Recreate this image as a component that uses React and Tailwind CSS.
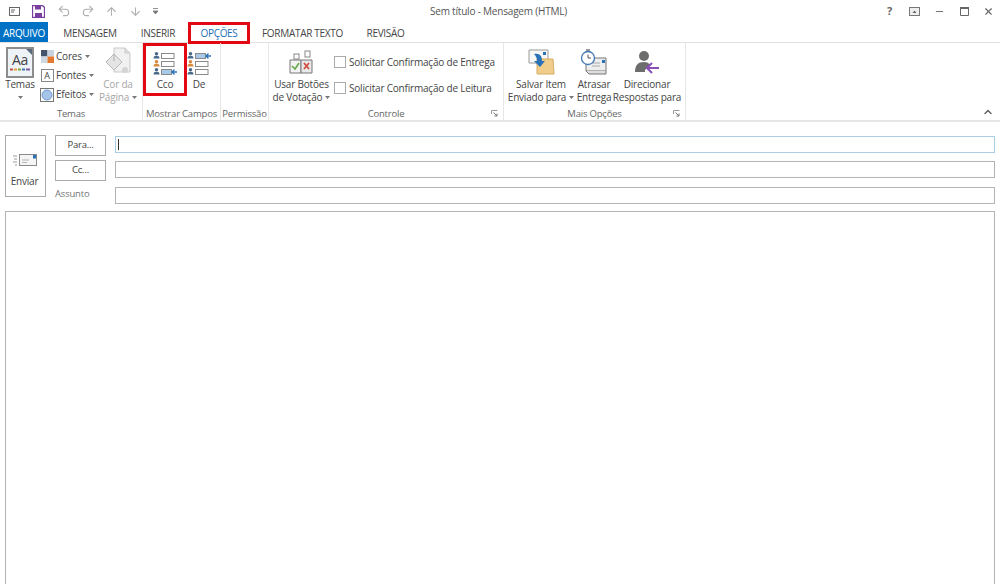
import React from "react";
import { Undo2, Redo2, ArrowUp, ArrowDown, Minus, X, ChevronUp } from "lucide-react";

// ---- Small drawings ----
const Caret = ({ className = "" }) => (
  <svg width="5" height="3" viewBox="0 0 5 3" className={`inline-block ${className}`}>
    <path d="M0 0h5L2.5 3z" fill="#777" />
  </svg>
);

const Launcher = () => (
  <svg width="7" height="7" viewBox="0 0 7 7">
    <path d="M.5 4V.5H6.5" fill="none" stroke="#999" />
    <path d="M2.5 2.5L6 6M6 3.5V6H3.5" fill="none" stroke="#777" />
  </svg>
);

const Person = ({ x, y, color }) => (
  <g>
    <circle cx={x + 3} cy={y + 1.8} r="1.8" fill={color} />
    <path d={`M${x} ${y + 6.5}c0-2 1-2.7 3-2.7s3 .7 3 2.7z`} fill={color} />
  </g>
);

const FieldsIcon = ({ variant }) => {
  const blueRow = variant === "cco" ? 2 : 0;
  return (
    <svg width="24" height="25" viewBox="0 0 24 25">
      {[0, 1, 2].map((i) => (
        <g key={i}>
          <Person x={0.5} y={1 + i * 8} color={i === 1 ? "#d98a3d" : "#4a6a8a"} />
          <rect
            x="8.5"
            y={2.5 + i * 8}
            width={i === blueRow ? 10 : 12.5}
            height="5"
            fill={i === blueRow ? "#a9c9e8" : "#fff"}
            stroke="#8a8a8a"
          />
          {i === blueRow && (
            <path
              d={`M24 ${5 + i * 8}h-5M21.5 ${2.5 + i * 8}L19 ${5 + i * 8}l2.5 2.5`}
              fill="none"
              stroke="#2a72b8"
              strokeWidth="1.4"
            />
          )}
        </g>
      ))}
    </svg>
  );
};

const ThemesIcon = () => (
  <div className="relative flex h-[31px] w-[28px] flex-col items-center border-2 border-[#8d8d8d] bg-[#eef3f8] pt-[2px]">
    <span className="text-[14px] leading-[17px] text-[#444]">Aa</span>
    <svg width="20" height="3" viewBox="0 0 20 3">
      <path d="M0 1.5h3" stroke="#c0504d" strokeWidth="2" />
      <path d="M4 1.5h3" stroke="#e89b3c" strokeWidth="2" />
      <path d="M8 1.5h3" stroke="#7aa843" strokeWidth="2" />
      <path d="M12 1.5h3" stroke="#3f76b8" strokeWidth="2" />
      <path d="M16 1.5h4" stroke="#7b5aa6" strokeWidth="2" />
    </svg>
    <svg width="6" height="6" viewBox="0 0 6 6" className="absolute right-0 top-0">
      <path d="M0 0h6v6z" fill="#5a6b7d" />
    </svg>
  </div>
);

const ColorsIcon = () => (
  <svg width="13" height="13" viewBox="0 0 13 13">
    <rect width="6.5" height="6.5" fill="#44546a" />
    <rect x="6.5" width="6.5" height="6.5" fill="#c9d3de" />
    <rect y="6.5" width="6.5" height="6.5" fill="#cfd8e3" />
    <rect x="6.5" y="6.5" width="6.5" height="6.5" fill="#e2792f" />
  </svg>
);

const EffectsIcon = () => (
  <svg width="14" height="14" viewBox="0 0 14 14">
    <rect x=".5" y=".5" width="13" height="13" fill="#fff" stroke="#777" />
    <circle cx="7" cy="7" r="5" fill="#a5c4ea" stroke="#6f9bd1" />
  </svg>
);

const PageColorIcon = () => (
  <svg width="26" height="30" viewBox="0 0 26 30">
    <path d="M9 1h11l5 5v19H9z" fill="#f1f1f1" stroke="#c9c9c9" />
    <path d="M20 1v5h5" fill="#ddd" stroke="#c9c9c9" />
    <path d="M1 15l8-8 8 8-8 8z" fill="#e4e4e4" stroke="#b9b9b9" />
    <path d="M9 7v7" stroke="#b0b0b0" />
    <circle cx="20" cy="23" r="3" fill="#d4d4d4" />
  </svg>
);

const VoteIcon = () => (
  <svg width="25" height="24" viewBox="0 0 25 24">
    <rect x="5" y="4" width="5" height="5" fill="#fff" stroke="#888" />
    <rect x="16" y="1" width="5" height="6" fill="#fff" stroke="#888" />
    <path d="M1 10h11v13H1z" fill="#f3f3f3" stroke="#777" />
    <path d="M12 10h11v13H12z" fill="#e8e8e8" stroke="#777" />
    <path d="M3 16l3 3 4-6" fill="none" stroke="#62a744" strokeWidth="1.5" />
    <path d="M15 13l5 6M20 13l-5 6" fill="none" stroke="#cf4a3c" strokeWidth="1.7" />
  </svg>
);

const SaveSentIcon = () => (
  <svg width="27" height="26" viewBox="0 0 27 26">
    <path d="M1 1h19v13H1z" fill="#f7f7f7" stroke="#9a9a9a" />
    <rect x="15" y="3" width="3" height="3" fill="#2a72b8" />
    <path d="M9 10h16l1 15H9z" fill="#f0cd8a" stroke="#d6ad63" />
    <path d="M6 5c6-1 8 2 8 7h3l-5 6-6-6h3c0-3-1-5-3-7z" fill="#2a72b8" />
  </svg>
);

const DelayIcon = () => (
  <svg width="28" height="26" viewBox="0 0 28 26">
    <path d="M6 9h20v13H6z" fill="#eee" stroke="#777" />
    <path d="M6 22l3 3h17v-3" fill="#ddd" stroke="#777" />
    <path d="M12 14h8M12 17h8" stroke="#aaa" />
    <rect x="22" y="11" width="3" height="3" fill="#2a72b8" />
    <circle cx="8" cy="9" r="6.5" fill="#fff" stroke="#3f76b8" strokeWidth="1.3" />
    <path d="M8 5.5V9h3" fill="none" stroke="#555" />
    <path d="M6 1h4" stroke="#777" strokeWidth="1.5" />
  </svg>
);

const ReplyToIcon = () => (
  <svg width="24" height="25" viewBox="0 0 24 25">
    <circle cx="9" cy="6" r="5" fill="#6d6d6d" />
    <path d="M0 22c0-7 3-10 9-10 3 0 5 1 6 3l-5 5v2z" fill="#6d6d6d" />
    <path d="M24 18H12M17 13l-5 5 5 5" fill="none" stroke="#8a4fb5" strokeWidth="2" />
  </svg>
);

const SendIcon = () => (
  <svg width="24" height="14" viewBox="0 0 24 14">
    <path d="M0 3h4M1 6h3M0 9h4M2 12h2" stroke="#9a9a9a" />
    <rect x="6.5" y="1.5" width="17" height="11" fill="#f5f5f5" stroke="#8a8a8a" />
    <rect x="20" y="2" width="3" height="3.5" fill="#2a72b8" />
    <path d="M9 7h7M9 9.5h5" stroke="#b5b5b5" />
  </svg>
);

// ---- Ribbon pieces ----
const Group = ({ width, label, launcher, children }) => (
  <div className="flex h-full shrink-0 flex-col border-r border-[#e6e6e6]" style={{ width }}>
    <div className="flex h-[65px] items-start">{children}</div>
    <div className="relative flex h-[11px] items-center justify-center whitespace-nowrap text-[9.5px] leading-[11px] text-[#666]">
      {label}
      {launcher && (
        <span className="absolute right-[5px] top-[2px] flex">
          <Launcher />
        </span>
      )}
    </div>
  </div>
);

const BigButton = ({ icon, lines, width, iconBox = "h-[32px]", muted = false }) => (
  <div
    className={`flex shrink-0 flex-col items-center text-[10px] leading-[13px] ${muted ? "text-[#a6a6a6]" : "text-[#444]"}`}
    style={{ width }}
  >
    <div className={`flex items-center justify-center ${iconBox}`}>{icon}</div>
    {lines.map((l, i) => (
      <span key={i} className="flex items-center gap-[3px] whitespace-nowrap">{l}</span>
    ))}
  </div>
);

const SmallItem = ({ icon, label }) => (
  <div className="flex h-[19px] items-center gap-[2px] text-[10px] text-[#444]">
    <span className="flex w-[14px] justify-center">{icon}</span>
    <span>{label}</span>
    <Caret className="ml-[1px]" />
  </div>
);

const Check = ({ label }) => (
  <div className="flex h-[26px] items-center gap-[3px] text-[10px] text-[#444]">
    <span className="h-[12px] w-[12px] border border-[#ababab] bg-white" />
    <span className="whitespace-nowrap">{label}</span>
  </div>
);

const Field = ({ focused, className = "mt-[1px] h-[17px]", children }) => (
  <div
    className={`ml-[9px] flex flex-1 items-center border bg-white ${className} ${focused ? "border-[#a9cde3]" : "border-[#b4b4b4]"}`}
  >
    {children}
  </div>
);

const SideButton = ({ label }) => (
  <div className="flex h-[21px] w-[51px] shrink-0 items-center justify-center border border-[#ababab] bg-white text-[9.5px] text-[#444]">
    {label}
  </div>
);

export default function App() {
  return (
    <div className="flex h-[584px] w-[1000px] flex-col overflow-hidden bg-white font-['Open_Sans',sans-serif] tracking-[-0.2px] text-[#444]">
      {/* title bar */}
      <div className="flex h-[22px] shrink-0 items-center pl-[9px] pr-[6px]">
        <svg width="11" height="9" viewBox="0 0 11 9" className="mr-[12px] shrink-0">
          <rect x=".5" y=".5" width="10" height="8" fill="#fff" stroke="#666" />
          <path d="M2 3h4M2 5h3" stroke="#666" />
        </svg>
        <svg width="13" height="13" viewBox="0 0 13 13" className="mr-[12px] shrink-0">
          <path d="M.5.5h10l2 2v10H.5z" fill="#fff" stroke="#7a3fa0" strokeWidth="1.3" />
          <rect x="3" y="1" width="6" height="3.5" fill="#7a3fa0" />
          <rect x="3" y="8" width="7" height="4.5" fill="#7a3fa0" />
        </svg>
        <Undo2 size={14} strokeWidth={2} className="mr-[10px] shrink-0 text-[#b0b0b0]" />
        <Redo2 size={14} strokeWidth={2} className="mr-[10px] shrink-0 text-[#b0b0b0]" />
        <ArrowUp size={13} strokeWidth={2} className="mr-[11px] shrink-0 text-[#b0b0b0]" />
        <ArrowDown size={13} strokeWidth={2} className="mr-[11px] shrink-0 text-[#b0b0b0]" />
        <svg width="5" height="6" viewBox="0 0 5 6" className="shrink-0">
          <path d="M0 .5h5M0 3h5L2.5 6z" stroke="#777" fill="#777" strokeWidth=".8" />
        </svg>
        <span className="flex-1 pr-[48px] text-center text-[10px] text-[#555]">Sem título - Mensagem (HTML)</span>
        <span className="w-[9px] text-[11px] font-bold text-[#666]">?</span>
        <svg width="11" height="9" viewBox="0 0 11 9" className="ml-[13px]">
          <rect x=".5" y=".5" width="10" height="8" fill="#eee" stroke="#777" />
          <path d="M3.5 6L5.5 3.5 7.5 6z" fill="#666" />
        </svg>
        <Minus size={11} strokeWidth={2} className="ml-[14px] text-[#666]" />
        <svg width="9" height="9" viewBox="0 0 9 9" className="ml-[15px]">
          <path d="M.5 1.5h8v7h-8z" fill="#fff" stroke="#666" />
          <path d="M0 1h9" stroke="#666" strokeWidth="2" />
        </svg>
        <X size={11} strokeWidth={2.5} className="ml-[14px] text-[#666]" />
      </div>

      {/* tabs */}
      <div className="flex h-[21px] shrink-0 items-stretch border-b border-[#e1e1e1] text-[10px] leading-[22px] tracking-[-0.3px] text-[#444]">
        <div className="w-[48px] bg-[#0072c6] text-center text-white">ARQUIVO</div>
        <div className="ml-[8px] w-[68px] text-center">MENSAGEM</div>
        <div className="ml-[6px] w-[56px] text-center">INSERIR</div>
        <div className="ml-[2px] h-[22px] w-[62px] border-[3px] border-[#e30613] text-center leading-[17px] text-[#1c6fb5]">OPÇÕES</div>
        <div className="ml-[12px] w-[80px] whitespace-nowrap text-center">FORMATAR TEXTO</div>
        <div className="ml-[24px] w-[39px] text-center">REVISÃO</div>
      </div>

      {/* ribbon */}
      <div className="relative flex h-[79px] shrink-0 border-b-2 border-[#e6e6e6]">
        <Group width={143} label="Temas">
          <div className="flex w-full pt-[3px]">
            <BigButton width={40} icon={<ThemesIcon />} lines={["Temas", <Caret className="mt-[5px]" />]} />
            <div className="flex w-[57px] shrink-0 flex-col pt-[1px]">
              <SmallItem icon={<ColorsIcon />} label="Cores" />
              <SmallItem icon={<span className="flex h-[13px] w-[13px] items-center justify-center border border-[#888] text-[9px]">A</span>} label="Fontes" />
              <SmallItem icon={<EffectsIcon />} label="Efeitos" />
            </div>
            <BigButton width={42} muted icon={<PageColorIcon />} lines={["Cor da", <>Página<Caret /></>]} />
          </div>
        </Group>
        <Group width={78} label="Mostrar Campos">
          <div className="flex w-full">
            <div className="h-[53px] w-[44px] shrink-0 border-[3px] border-[#e30613] pt-[3px]">
              <BigButton width={38} iconBox="h-[29px]" icon={<FieldsIcon variant="cco" />} lines={["Cco"]} />
            </div>
            <div className="pt-[6px]">
              <BigButton width={24} iconBox="h-[29px]" icon={<FieldsIcon variant="de" />} lines={["De"]} />
            </div>
          </div>
        </Group>
        <Group width={48} label="Permissão" />
        <Group width={235} label="Controle" launcher>
          <div className="flex w-full pt-[3px]">
            <BigButton width={65} icon={<VoteIcon />} lines={["Usar Botões", <>de Votação<Caret /></>]} />
            <div className="flex flex-col pt-[3px]">
              <Check label="Solicitar Confirmação de Entrega" />
              <Check label="Solicitar Confirmação de Leitura" />
            </div>
          </div>
        </Group>
        <Group width={182} label="Mais Opções" launcher>
          <div className="flex w-full pt-[3px]">
            <BigButton width={74} icon={<SaveSentIcon />} lines={["Salvar Item", <>Enviado para<Caret /></>]} />
            <BigButton width={32} icon={<DelayIcon />} lines={["Atrasar", "Entrega"]} />
            <BigButton width={74} icon={<ReplyToIcon />} lines={["Direcionar", "Respostas para"]} />
          </div>
        </Group>
        <ChevronUp size={12} strokeWidth={3} className="absolute bottom-[2px] right-[6px] text-[#666]" />
      </div>

      {/* compose */}
      <div className="flex min-h-0 flex-1 flex-col px-[5px] pt-[13px]">
        <div className="flex">
          <div className="flex h-[62px] w-[41px] shrink-0 flex-col items-center border border-[#ababab] pr-[2px] pt-[17px] text-[10px]">
            <SendIcon />
            <span className="mt-[7px]">Enviar</span>
          </div>
          <div className="ml-[9px] flex flex-1 flex-col">
            <div className="flex h-[25px] items-start">
              <SideButton label="Para..." />
              <Field focused>
                <span className="ml-[2px] h-[11px] w-px bg-[#333]" />
              </Field>
            </div>
            <div className="flex h-[25px] items-start">
              <SideButton label="Cc..." />
              <Field />
            </div>
            <div className="flex h-[19px] items-start">
              <span className="w-[51px] shrink-0 text-[9.5px] leading-[18px] text-[#777]">Assunto</span>
              <Field className="mt-[2px] h-[17px]" />
            </div>
          </div>
        </div>
        <div className="mt-[7px] min-h-0 flex-1 border border-b-0 border-[#b4b4b4]" />
      </div>
    </div>
  );
}
